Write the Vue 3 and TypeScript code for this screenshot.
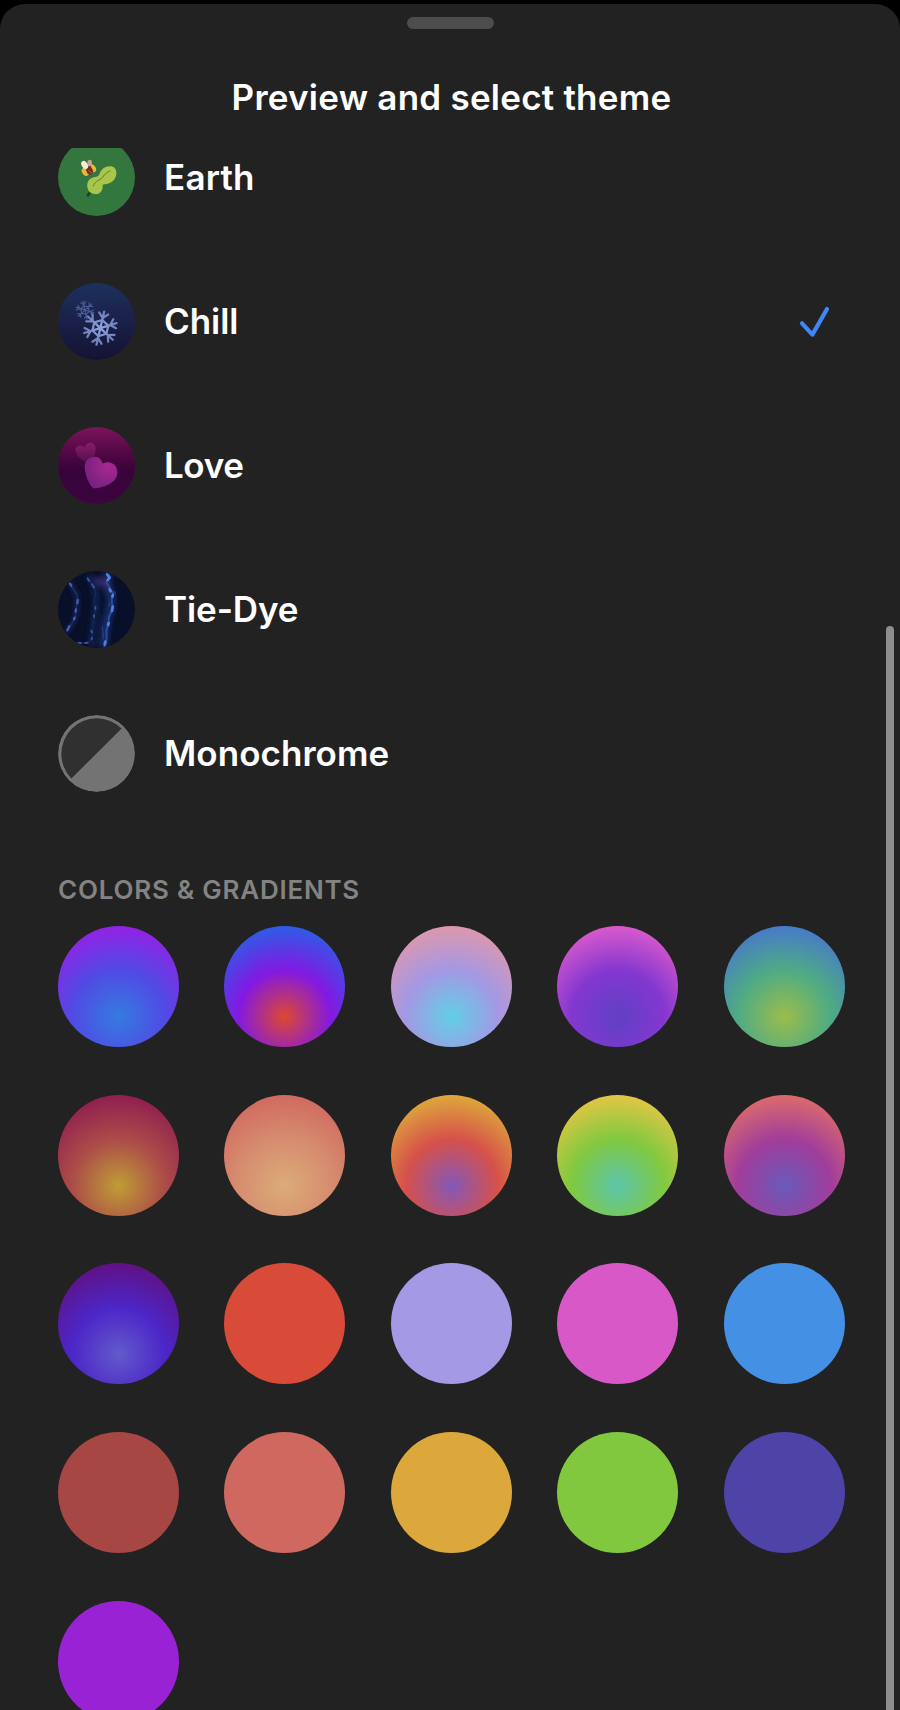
<script setup lang="ts">
import { ref } from 'vue'

interface Theme {
  id: string
  name: string
  tracking: string
}

const themes: Theme[] = [
  { id: 'earth', name: 'Earth', tracking: '0.2px' },
  { id: 'chill', name: 'Chill', tracking: '-0.05px' },
  { id: 'love', name: 'Love', tracking: '-0.4px' },
  { id: 'tiedye', name: 'Tie-Dye', tracking: '-0.1px' },
  { id: 'mono', name: 'Monochrome', tracking: '0.05px' },
]

const selected = ref('chill')

// Each swatch lists its colours from the glow outwards.
const swatches: string[][] = [
  ['#347be0', '#504be4', '#9620e4'],
  ['#dc4830', '#8219e2', '#2960e6'],
  ['#60d0e6', '#a498e4', '#e097aa'],
  ['#5f40c4', '#8437d0', '#de5bcc'],
  ['#9bbd4b', '#4fab83', '#4678cc'],
  ['#bf9d35', '#ac4c48', '#8e1c51'],
  ['#dbac78', '#d68d6f', '#d0685f'],
  ['#8358b8', '#d6514a', '#deac3a'],
  ['#5cc5aa', '#80c940', '#e7c644'],
  ['#685bba', '#a13d9b', '#de6d68'],
  ['#635acb', '#4c26c8', '#611080'],
  ['#d84b38'],
  ['#a499e4'],
  ['#d958c8'],
  ['#4490e4'],
  ['#a64743'],
  ['#cf6960'],
  ['#dca83b'],
  ['#82c83e'],
  ['#4e43a6'],
  ['#9a22d5'],
]

function fill(c: string[]): string {
  if (c.length === 1) return c[0]
  return `radial-gradient(circle 93px at 50% 75%, ${c[0]}, ${c[1]} 50%, ${c[2]})`
}

const arms = [0, 60, 120, 180, 240, 300]
</script>

<template>
  <main class="screen">
    <section class="sheet">
      <header class="head">
        <span class="grabber"></span>
        <h1>Preview and select theme</h1>
      </header>

      <div class="viewport">
        <ul class="themes">
          <li v-for="t in themes" :key="t.id" class="row" @click="selected = t.id">
            <svg v-if="t.id === 'earth'" class="disc" viewBox="54 12 231 231">
              <rect x="54" y="12" width="231" height="231" fill="#33773e" />
              <path d="M139 184 Q141 173 152 168 L158 172 Q150 176 146 185Z" fill="#0c4b28" />
              <path
                d="M150 172 C137 159 139 133 157 128 C166 125 174 127 178 118 C184 99 199 91 215 94 C230 98 233 116 225 130 C218 143 205 147 188 149 C190 166 180 178 166 177 Q157 178 150 172Z"
                fill="#a9c64a"
              />
              <path
                d="M160 153 C166 135 180 137 188 127 C195 116 202 110 210 108"
                fill="none"
                stroke="#4b8736"
                stroke-width="3"
                stroke-linecap="round"
              />
              <ellipse cx="136" cy="110" rx="10" ry="13" transform="rotate(-30 136 110)" fill="#eeb638" />
              <ellipse cx="158" cy="100" rx="9" ry="13" transform="rotate(-30 158 100)" fill="#eeb638" />
              <path d="M134 96 L149 88 L160 108 Q159 116 151 120 L142 115Z" fill="#6b3020" />
              <path d="M145 106 l11 8" stroke="#b96c37" stroke-width="3" />
              <ellipse cx="149" cy="84" rx="7" ry="10" fill="#c7a28c" />
              <ellipse cx="134" cy="90" rx="9" ry="13" transform="rotate(-32 134 90)" fill="#f8ead1" />
            </svg>

            <svg v-else-if="t.id === 'chill'" class="disc" viewBox="54 38.7 231 231">
              <defs>
                <linearGradient id="chill-bg" x1="0" y1="0" x2="0" y2="1">
                  <stop offset="0" stop-color="#1d315d" />
                  <stop offset="0.5" stop-color="#1a2049" />
                  <stop offset="1" stop-color="#141333" />
                </linearGradient>
                <radialGradient
                  id="chill-flake"
                  gradientUnits="userSpaceOnUse"
                  cx="0"
                  cy="-6"
                  r="56"
                >
                  <stop offset="0" stop-color="#91a4e2" />
                  <stop offset="0.5" stop-color="#7688c4" />
                  <stop offset="1" stop-color="#6c7ab2" />
                </radialGradient>
                <g id="flake" fill="none" stroke-linecap="round">
                  <path
                    v-for="a in arms"
                    :key="a"
                    :transform="`rotate(${a})`"
                    d="M0 0 L0.1 -51 M-14 -45 L0 -31 L14 -45 M0 -25 L21.6 -12.5"
                  />
                </g>
              </defs>
              <rect x="54" y="38" width="231" height="232" fill="url(#chill-bg)" />
              <use
                href="#flake"
                transform="translate(135 120) rotate(-13) scale(0.54)"
                stroke="#4a5b93"
                stroke-width="6.5"
              />
              <use
                href="#flake"
                transform="translate(181 174) rotate(13)"
                stroke="url(#chill-flake)"
                stroke-width="6.8"
              />
            </svg>

            <svg v-else-if="t.id === 'love'" class="disc" viewBox="54 36 231 231">
              <defs>
                <linearGradient id="love-bg" x1="0" y1="0" x2="0" y2="1">
                  <stop offset="0" stop-color="#7b155b" />
                  <stop offset="0.32" stop-color="#550845" />
                  <stop offset="0.55" stop-color="#38033a" />
                  <stop offset="1" stop-color="#3c0440" />
                </linearGradient>
                <radialGradient id="love-heart" cx="0.72" cy="0.3" r="0.75">
                  <stop offset="0" stop-color="#a82890" />
                  <stop offset="0.55" stop-color="#8f2488" />
                  <stop offset="1" stop-color="#782180" />
                </radialGradient>
                <linearGradient id="love-small" x1="0" y1="0" x2="0" y2="1">
                  <stop offset="0" stop-color="#8a1c6c" />
                  <stop offset="1" stop-color="#551052" />
                </linearGradient>
              </defs>
              <rect x="54" y="36" width="231" height="231" fill="url(#love-bg)" />
              <path
                d="M136 139 C120 134 106 117 106 103 C106 91 125 88 134 97 C138 83 154 79 162 87 C171 98 167 117 158 129 Q148 140 136 139Z"
                fill="url(#love-small)"
              />
              <path
                d="M160 220 C147 208 134 178 134 155 C134 131 158 120 173 127 C182 131 186 138 188 146 C198 139 214 140 224 150 C236 162 234 186 222 197 C208 210 178 221 160 220Z"
                fill="url(#love-heart)"
              />
            </svg>

            <svg v-else-if="t.id === 'tiedye'" class="disc" viewBox="54 32 231 231">
              <defs>
                <filter id="dye-haze" x="-50%" y="-20%" width="200%" height="140%">
                  <feGaussianBlur stdDeviation="8" />
                </filter>
                <filter id="dye-soft" x="-50%" y="-20%" width="200%" height="140%">
                  <feGaussianBlur stdDeviation="2.2" />
                </filter>
              </defs>
              <rect x="54" y="32" width="231" height="231" fill="#080f28" />
              <g fill="none" filter="url(#dye-haze)">
                <path d="M87 65 Q116 97 112 145 Q105 193 75 218" stroke="#14224f" stroke-width="13" />
                <path d="M145 43 Q180 105 164 168 Q158 216 155 260" stroke="#101b45" stroke-width="25" />
                <path d="M204 36 Q195 75 212 106 Q216 145 200 178 L190 261" stroke="#182c66" stroke-width="26" />
                <path d="M166 68 Q185 55 205 81" stroke="#302967" stroke-width="24" />
              </g>
              <g fill="none" stroke-linecap="round" stroke-linejoin="round" filter="url(#dye-soft)">
                <g stroke-width="4">
                  <path d="M88 68 L95 80 L110 101 L114 120 L110 133 L108 151 L105 173 L92 195 L82 211" stroke="#1e306f" />
                  <path d="M142 50 L151 65 L160 80 L168 98 L163 120 L166 146 L161 174 L157 211 L157 237 Q145 250 112 247" stroke="#17265a" />
                  <path d="M200 40 L209 52 L199 66 L209 83 L219 98 L215 119 L218 140 L214 155 L207 169 L205 193 L199 211 L200 236 L193 261" stroke="#2b4c9c" stroke-width="6" />
                </g>
                <path
                  d="M90 70 l4 6 M113 119 l-1 9 M108 147 l-1 7 M104 172 l-2 5 M88 198 l-6 12"
                  stroke="#4060bc"
                  stroke-width="7"
                />
                <path
                  d="M143 55 l5 7 M156 72 l6 9 M166 141 v5 M162 165 v4 M154 211 l2 5 M155 233 v3 M115 247 l8 1 M136 248 l7 -1"
                  stroke="#3850a0"
                  stroke-width="6"
                />
                <path
                  d="M202 43 l7 9 -6 7 M209 87 l3 6 M219 104 l-2 5 M218 139 l-2 13 M206 188 l-2 6 M196 244 l-2 8"
                  stroke="#5280de"
                  stroke-width="8"
                />
                <path d="M224 94 l2 5 M210 128 l-4 9 M187 200 l3 35" stroke="#213e88" stroke-width="4" />
              </g>
            </svg>

            <svg v-else class="disc" viewBox="0 0 77 77">
              <circle cx="38.5" cy="38.5" r="38.5" fill="#737373" />
              <path d="M63.6 13.4 A35.5 35.5 0 0 0 13.4 63.6Z" fill="#303030" />
            </svg>

            <span class="name" :style="{ letterSpacing: t.tracking }">{{ t.name }}</span>

            <svg v-if="selected === t.id" class="check" viewBox="0 0 32 32">
              <path
                d="M4 17.3 L14.4 28.6 L29 3"
                fill="none"
                stroke="#4186f5"
                stroke-width="4.2"
                stroke-linecap="round"
                stroke-linejoin="round"
              />
            </svg>
          </li>
        </ul>

        <h2>COLORS &amp; GRADIENTS</h2>

        <div class="swatches">
          <button
            v-for="(s, i) in swatches"
            :key="i"
            type="button"
            class="swatch"
            :style="{ background: fill(s) }"
          ></button>
        </div>
        <span class="scrollbar"></span>
      </div>
    </section>
  </main>
</template>

<style>
body {
  background: #000;
}
</style>

<style scoped>
.screen {
  box-sizing: border-box;
  height: 1710px;
  padding-top: 4px;
  overflow: hidden;
  background: #000;
  color: #fff;
  font-family: Inter, 'Liberation Sans', sans-serif;
}

.sheet {
  display: flex;
  flex-direction: column;
  height: 1706px;
  overflow: hidden;
  border-radius: 25px 25px 0 0;
  background: #222;
}

.head {
  display: flex;
  flex: none;
  flex-direction: column;
  align-items: center;
  box-sizing: border-box;
  height: 144px;
  padding-top: 13px;
}

.grabber {
  width: 87px;
  height: 12px;
  border-radius: 6px;
  background: #4d4d4d;
}

h1 {
  margin: 47px 0 0 3px;
  font-size: 35px;
  font-weight: 600;
  line-height: 42px;
  letter-spacing: 0.24px;
}

.viewport {
  position: relative;
  flex: 1;
  min-height: 0;
  overflow: hidden;
}

.themes {
  margin: -42.5px 0 0;
  padding: 0;
  list-style: none;
}

.row {
  display: flex;
  align-items: center;
  box-sizing: border-box;
  height: 144px;
  padding: 0 70px 0 57.7px;
}

.disc {
  flex: none;
  width: 77px;
  height: 77px;
  border-radius: 50%;
}

.name {
  flex: 1;
  margin: 0 0 2px 29.3px;
  font-size: 35px;
  font-weight: 600;
  line-height: 42px;
}

.check {
  width: 32px;
  height: 32px;
}

h2 {
  margin: 48px 0 0 58px;
  color: #838383;
  font-size: 26px;
  font-weight: 600;
  line-height: 32px;
  letter-spacing: 0.77px;
}

.swatches {
  display: grid;
  grid-template-columns: repeat(5, 121px);
  gap: 47.7px 45.6px;
  margin: 20.5px 0 0 57.7px;
}

.swatch {
  width: 121px;
  height: 121px;
  padding: 0;
  border: 0;
  border-radius: 50%;
}

.scrollbar {
  position: absolute;
  top: 478px;
  right: 6px;
  width: 8px;
  height: 1200px;
  border-radius: 4px;
  background: #8e8e8e;
}
</style>
